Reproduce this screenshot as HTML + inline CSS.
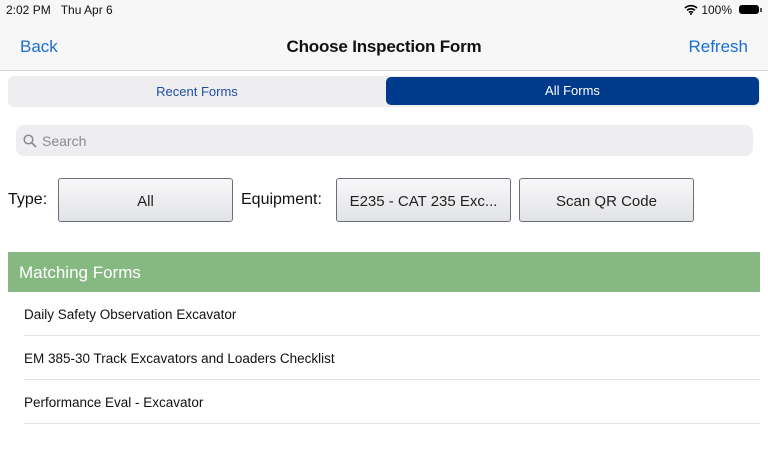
<!DOCTYPE html>
<html><head><style>
body{margin:0;width:768px;height:465px;background:#fff;font-family:"Liberation Sans",sans-serif;position:relative;overflow:hidden;color:#111}
.a{position:absolute}
.btn{position:absolute;top:178px;height:44px;border:1px solid #6b6e78;border-radius:3px;background:linear-gradient(#f8f8f9,#e2e3e6);display:flex;align-items:center;justify-content:center;font-size:15px;color:#222;box-sizing:border-box;padding-top:2px}
.row{position:absolute;left:24px;width:736px;height:44px;border-bottom:1px solid #e3e3e5;font-size:13.5px;line-height:46px;box-sizing:border-box}
</style></head><body>
<div class="a" style="left:0;top:0;width:768px;height:70px;background:#f7f7f7;border-bottom:1px solid #d4d4d6"></div>
<div class="a" style="left:6px;top:3px;font-size:12px">2:02 PM&nbsp;&nbsp;&nbsp;Thu Apr 6</div>
<div class="a" style="left:684px;top:3px;font-size:12px">
<svg width="14" height="11" viewBox="0 0 14 11" style="vertical-align:-1px"><path d="M1 4a9 9 0 0 1 12 0M3 6.3a6 6 0 0 1 8 0M5 8.5a3 3 0 0 1 4 0" stroke="#000" stroke-width="1.6" fill="none"/><circle cx="7" cy="10" r="1" fill="#000"/></svg> 100%</div>
<div class="a" style="left:739px;top:5px;width:20px;height:9px;border-radius:3px;background:#000"></div>
<div class="a" style="left:760px;top:8px;width:2px;height:4px;background:#555"></div>
<div class="a" style="left:20px;top:37px;font-size:17px;color:#1a6fd0">Back</div>
<div class="a" style="left:0;width:768px;top:37px;font-size:17px;text-align:center;font-weight:bold;letter-spacing:-0.2px">Choose Inspection Form</div>
<div class="a" style="right:20px;top:37px;font-size:17px;color:#1a6fd0">Refresh</div>
<div class="a" style="left:8px;top:76px;width:752px;height:31px;background:#eeeef0;border-radius:6px"></div>
<div class="a" style="left:8px;top:76px;width:378px;height:31px;line-height:31px;text-align:center;font-size:13px;color:#1f4fa6">Recent Forms</div>
<div class="a" style="left:386px;top:77px;width:373px;height:28px;line-height:28px;text-align:center;font-size:13px;color:#fff;background:#003a8c;border-radius:5px">All Forms</div>
<div class="a" style="left:16px;top:125px;width:737px;height:31px;background:#eeeef0;border-radius:8px"></div>
<svg class="a" style="left:23px;top:134px" width="14" height="14" viewBox="0 0 14 14"><circle cx="5.5" cy="5.5" r="4.3" stroke="#8a8a8e" stroke-width="1.5" fill="none"/><path d="M8.7 8.7L13 13" stroke="#8a8a8e" stroke-width="1.6"/></svg>
<div class="a" style="left:42px;top:133px;font-size:14px;color:#8a8a8e">Search</div>
<div class="a" style="left:8px;top:191px;font-size:16px">Type:</div>
<div class="btn" style="left:58px;width:175px">All</div>
<div class="a" style="left:241px;top:191px;font-size:16px">Equipment:</div>
<div class="btn" style="left:336px;width:175px">E235 - CAT 235 Exc...</div>
<div class="btn" style="left:519px;width:175px">Scan QR Code</div>
<div class="a" style="left:8px;top:252px;width:752px;height:40px;background:#86b882;color:#fff;font-size:17px;line-height:42px;padding-left:11px;box-sizing:border-box">Matching Forms</div>
<div class="row" style="top:292px">Daily Safety Observation Excavator</div>
<div class="row" style="top:336px">EM 385-30 Track Excavators and Loaders Checklist</div>
<div class="row" style="top:380px">Performance Eval - Excavator</div>
</body></html>
